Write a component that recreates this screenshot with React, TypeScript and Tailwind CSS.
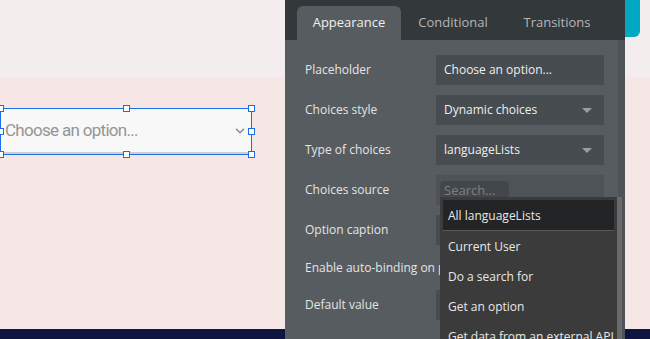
import { ChevronDown } from 'lucide-react'

const font = { fontFamily: '"Open Sans", "Liberation Sans", sans-serif' }

function Handle({ className }: { className: string }) {
  return <div className={`absolute h-[7px] w-[7px] border-[1.5px] border-[#1a6fe8] bg-white ${className}`} />
}

function Caret() {
  return <div className="h-0 w-0 border-x-[5px] border-t-[5px] border-x-transparent border-t-[#9a9ea1]" />
}

function SelectBox({ value }: { value: string }) {
  return (
    <div className="flex h-[30px] items-center justify-between bg-[#474c50] pl-2 pr-3 text-[#eeeeee]">
      <span>{value}</span>
      <Caret />
    </div>
  )
}

export default function App() {
  const items = ['Current User', 'Do a search for', 'Get an option', 'Get data from an external API']

  return (
    <div className="relative h-[339px] w-[650px] overflow-hidden">
      {/* canvas */}
      <div className="flex h-full flex-col">
        <div className="h-[77px] bg-[#f3eded]" />
        <div className="relative flex-1 bg-[#f6e6e6]">
          <div className="absolute left-0 top-[31px] h-[47px] w-[252px] border-[1.5px] border-[#1a6fe8] bg-[#f8f8f8]">
            <div className="flex h-full items-center justify-between border-b-2 border-[#cfcfcf] pl-[4px] pr-[4px]">
              <span
                className="text-[17px] tracking-[-0.7px] text-[#959595]"
                style={{ fontFamily: 'Roboto, "Liberation Sans", sans-serif' }}
              >
                Choose an option...
              </span>
              <ChevronDown size={14} strokeWidth={2.5} className="text-[#8a8a8a]" />
            </div>
            <Handle className="-left-[4px] -top-[4px]" />
            <Handle className="left-[122px] -top-[4px]" />
            <Handle className="-right-[4px] -top-[4px]" />
            <Handle className="-left-[4px] top-[19px]" />
            <Handle className="-right-[4px] top-[19px]" />
            <Handle className="-left-[4px] -bottom-[4px]" />
            <Handle className="left-[122px] -bottom-[4px]" />
            <Handle className="-right-[4px] -bottom-[4px]" />
          </div>
        </div>
        <div className="h-[10px] bg-[#0d1540]" />
      </div>

      {/* teal tab */}
      <div className="absolute left-[625px] top-0 h-[37px] w-[15px] rounded-br-md bg-[#00a9c1]" />

      {/* property editor */}
      <div className="absolute left-[285px] top-0 flex h-[339px] w-[340px] flex-col text-[12px]" style={font}>
        <div className="flex h-10 items-end bg-[#33383b] pl-3 text-[13px]">
          <div className="flex h-[34px] w-[104px] items-center justify-center rounded-t-md bg-[#575c60] text-[#f0f0f0]">Appearance</div>
          <div className="flex h-[34px] w-[104px] items-center justify-center text-[#b4b6b8]">Conditional</div>
          <div className="flex h-[34px] w-[104px] items-center justify-center text-[#b4b6b8]">Transitions</div>
        </div>
        <div className="flex flex-1">
          <div className="flex w-[333px] flex-col gap-[10px] bg-[#575c60] pl-5 pr-[14px] pt-[15px] text-[#e4e4e4]">
            <div className="flex h-[30px] items-center">
              <div className="w-[131px]">Placeholder</div>
              <div className="flex h-full w-[168px] items-center bg-[#474c50] pl-2 text-[#eeeeee]">Choose an option...</div>
            </div>
            <div className="flex h-[30px] items-center">
              <div className="w-[131px]">Choices style</div>
              <div className="w-[168px]"><SelectBox value="Dynamic choices" /></div>
            </div>
            <div className="flex h-[30px] items-center">
              <div className="w-[131px]">Type of choices</div>
              <div className="w-[168px]"><SelectBox value="languageLists" /></div>
            </div>
            <div className="relative z-10 flex h-[30px] items-center">
              <div className="w-[131px]">Choices source</div>
              <div className="relative h-full w-[168px] bg-[#4e5357]">
                <div className="absolute left-1 top-[6px] h-4 w-[69px] overflow-hidden rounded-t-sm bg-[#43474b] pl-1 text-[13px] leading-[19px] text-[#7c8083]">
                  Search...
                </div>
                <div className="absolute left-1 top-[22px] flex h-[150px] w-[182px] overflow-hidden bg-[#3b3b3b] text-[#e8e8e8]">
                  <div className="flex min-w-0 flex-1 flex-col overflow-hidden pl-[3px] pr-[3px] pt-[3px]">
                    <div className="flex h-[31px] shrink-0 items-center border-b border-[#56585a] bg-[#232425] pl-[5px] pt-[1px]">All languageLists</div>
                    {items.map(item => (
                      <div key={item} className="flex h-[30px] shrink-0 items-center whitespace-nowrap pl-[5px] pt-[2px]">{item}</div>
                    ))}
                  </div>
                  <div className="w-[5px] shrink-0 bg-[#6a6a6a]" />
                </div>
              </div>
            </div>
            <div className="flex h-[30px] items-center">
              <div className="w-[131px]">Option caption</div>
              <div className="h-full w-[168px] bg-[#474c50]" />
            </div>
            <div className="flex h-[25px] items-center">
              <div className="w-[135px] overflow-hidden whitespace-nowrap">Enable auto-binding on parent group's thing</div>
            </div>
            <div className="flex h-[30px] items-center">
              <div className="w-[131px]">Default value</div>
              <div className="h-full w-[168px] bg-[#474c50]" />
            </div>
          </div>
          <div className="w-[7px] bg-[#4e5357]" />
        </div>
      </div>
    </div>
  )
}
